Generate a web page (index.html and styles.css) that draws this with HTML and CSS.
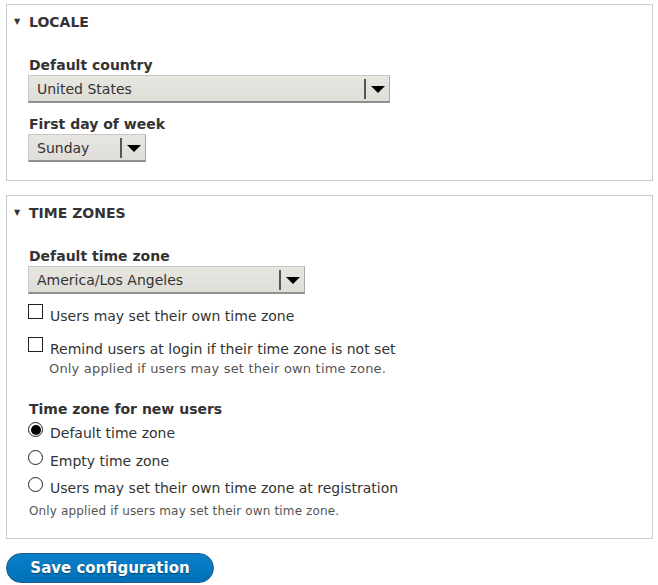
FILE: index.html
```html
<!DOCTYPE html>
<html lang="en">
<head>
  <meta charset="UTF-8" />
  <title>Regional settings</title>
  <link rel="stylesheet" href="styles.css">
</head>
<body>

  <!-- Locale -->
  <div class="fieldset">
    <div class="legend"><span class="caret">▼</span>LOCALE</div>
    <div class="item first">
      <div class="label">Default country</div>
      <div class="select wide"><span class="value">United States</span><span class="arrow"></span></div>
    </div>
    <div class="item">
      <div class="label">First day of week</div>
      <div class="select small"><span class="value">Sunday</span><span class="arrow"></span></div>
    </div>
  </div>

  <!-- Time zones -->
  <div class="fieldset zones">
    <div class="legend"><span class="caret">▼</span>TIME ZONES</div>
    <div class="item first">
      <div class="label">Default time zone</div>
      <div class="select medium"><span class="value">America/Los Angeles</span><span class="arrow"></span></div>
    </div>
    <div class="check">
      <span class="box"></span><span class="text">Users may set their own time zone</span>
    </div>
    <div class="check">
      <span class="box"></span><span class="text">Remind users at login if their time zone is not set</span>
    </div>
    <div class="desc indent">Only applied if users may set their own time zone.</div>

    <div class="item group">
      <div class="label">Time zone for new users</div>
      <div class="radio"><span class="dot on"></span><span class="text">Default time zone</span></div>
      <div class="radio"><span class="dot"></span><span class="text">Empty time zone</span></div>
      <div class="radio"><span class="dot"></span><span class="text">Users may set their own time zone at registration</span></div>
      <div class="desc tiny">Only applied if users may set their own time zone.</div>
    </div>
  </div>

  <button class="save">Save configuration</button>

</body>
</html>
```

FILE: styles.css
```css
* { margin: 0; padding: 0; box-sizing: border-box; }
body {
  padding: 4px 5px 0 6px;
  font-family: "DejaVu Sans", Verdana, sans-serif;
  font-size: 13px;
  color: #333;
  background: #fff;
}

.fieldset {
  border: 1px solid #ccc;
  padding: 8px 22px 17px 21px;
  height: 177px;
}
.fieldset.zones {
  margin-top: 14px;
  height: 344px;
}

.legend {
  font-weight: bold;
  font-size: 14px;
  line-height: 18px;
  margin-left: -14px;
  display: flex;
  align-items: center;
}
.caret {
  font-size: 8px;
  width: 15px;
  display: inline-block;
}

.item.first { margin-top: 24px; }
.item { margin-top: 11px; }
.label {
  font-weight: bold;
  font-size: 14px;
  line-height: 18px;
  padding-top: 1px;
  margin-bottom: 1px;
  padding-left: 1px;
}

.select {
  height: 28px;
  background: linear-gradient(#e8e6e1, #dfddd7);
  border: 1px solid #c8c8c8;
  border-bottom: 2px solid #8f8f8f;
  border-right-color: #a8a8a8;
  display: flex;
  align-items: center;
  font-size: 14px;
}
.select.wide { width: 362px; }
.select.small { width: 118px; }
.select.medium { width: 277px; }
.select .value {
  flex: 1;
  padding-left: 8px;
}
.select .arrow {
  width: 25px;
  height: 20px;
  border-left: 2px solid #555;
  position: relative;
}
.select .arrow::after {
  content: "";
  position: absolute;
  left: 5px;
  top: 7px;
  border-left: 7px solid transparent;
  border-right: 7px solid transparent;
  border-top: 7px solid #000;
}

.check, .radio {
  display: flex;
  align-items: flex-start;
  font-size: 14px;
  line-height: 18px;
}
.check { margin-top: 10px; }
.check + .check { margin-top: 12px; }
.check .text { padding-top: 3px; }
.box {
  width: 15px;
  height: 15px;
  border: 1px solid #222;
  margin-right: 7px;
}

.desc {
  color: #555;
  font-size: 13px;
  line-height: 18px;
  letter-spacing: 0.18px;
}
.desc.indent { margin-left: 21px; margin-top: 2px; }
.desc.tiny { font-size: 12px; margin-top: 5px; padding-left: 1px; letter-spacing: 0.15px; }

.item.group { margin-top: 21px; }
.radio { margin-top: 8px; }
.radio + .radio + .radio { margin-top: 7px; }
.radio .text { padding-top: 2px; }
.item.group .label + .radio { margin-top: 4px; }
.dot {
  width: 15px;
  height: 15px;
  border: 1px solid #222;
  border-radius: 50%;
  margin-right: 7px;
  position: relative;
}
.dot.on::after {
  content: "";
  position: absolute;
  left: 1.5px;
  top: 1.5px;
  width: 10px;
  height: 10px;
  border-radius: 50%;
  background: #000;
}

.save {
  margin-top: 14px;
  width: 208px;
  height: 30px;
  border: 1px solid #1e5c90;
  border-radius: 20px;
  background: linear-gradient(#0a7fc8, #0071b8);
  color: #fff;
  font-family: "DejaVu Sans", Verdana, sans-serif;
  font-weight: bold;
  font-size: 15px;
  text-shadow: 0 1px 1px rgba(0, 0, 0, 0.4);
}
```
